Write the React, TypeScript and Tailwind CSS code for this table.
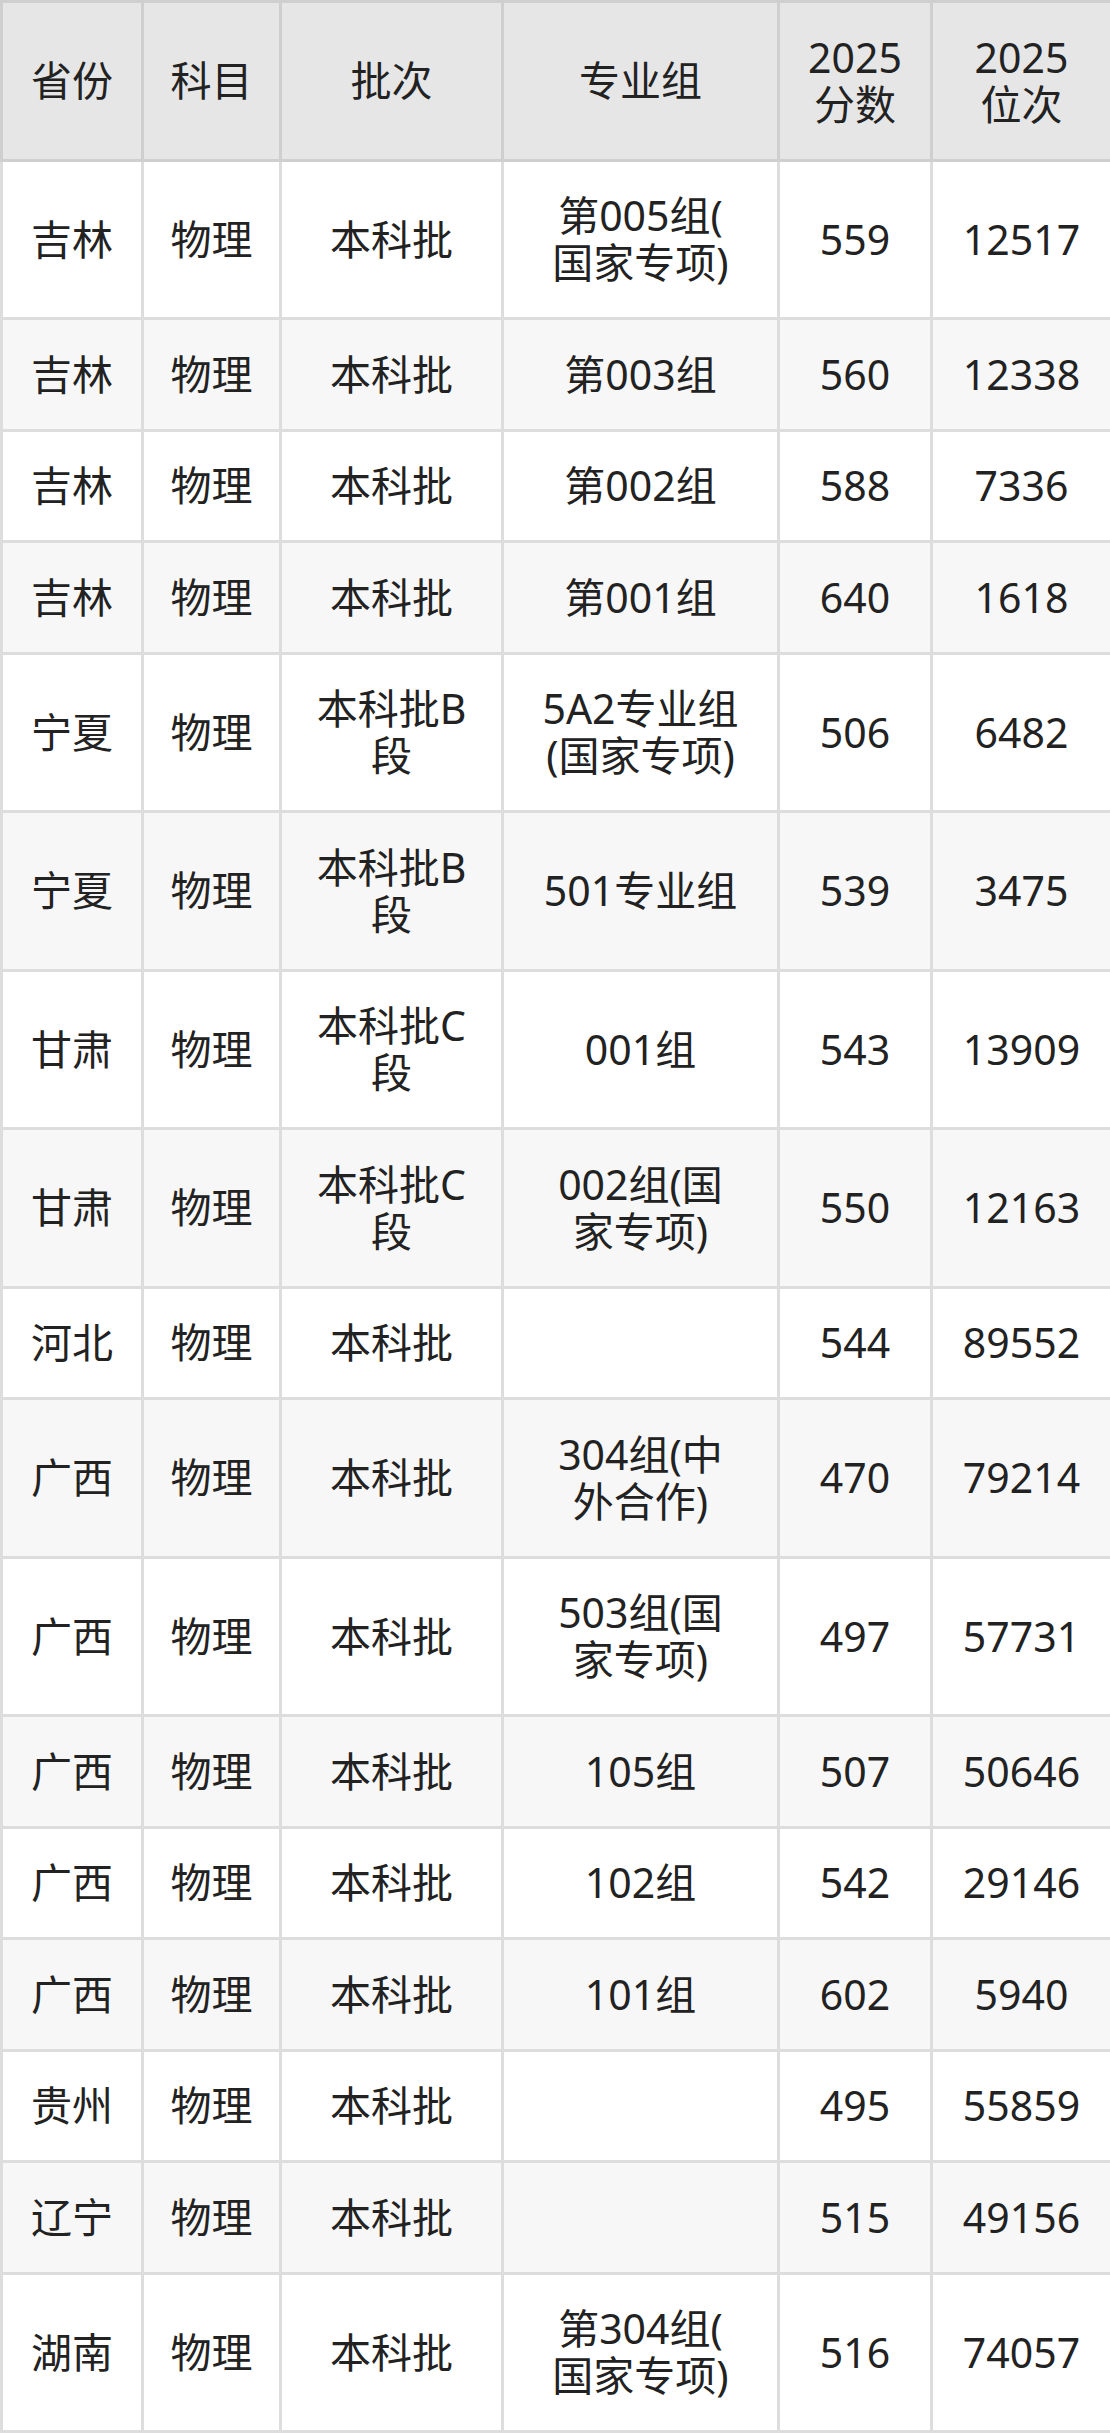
import React from 'react';

interface Row {
  province: string;
  subject: string;
  batch: string[];
  group: string[];
  score: string;
  rank: string;
}

const rows: Row[] = [
  { province: '吉林', subject: '物理', batch: ['本科批'], group: ['第005组(', '国家专项)'], score: '559', rank: '12517' },
  { province: '吉林', subject: '物理', batch: ['本科批'], group: ['第003组'], score: '560', rank: '12338' },
  { province: '吉林', subject: '物理', batch: ['本科批'], group: ['第002组'], score: '588', rank: '7336' },
  { province: '吉林', subject: '物理', batch: ['本科批'], group: ['第001组'], score: '640', rank: '1618' },
  { province: '宁夏', subject: '物理', batch: ['本科批B', '段'], group: ['5A2专业组', '(国家专项)'], score: '506', rank: '6482' },
  { province: '宁夏', subject: '物理', batch: ['本科批B', '段'], group: ['501专业组'], score: '539', rank: '3475' },
  { province: '甘肃', subject: '物理', batch: ['本科批C', '段'], group: ['001组'], score: '543', rank: '13909' },
  { province: '甘肃', subject: '物理', batch: ['本科批C', '段'], group: ['002组(国', '家专项)'], score: '550', rank: '12163' },
  { province: '河北', subject: '物理', batch: ['本科批'], group: [], score: '544', rank: '89552' },
  { province: '广西', subject: '物理', batch: ['本科批'], group: ['304组(中', '外合作)'], score: '470', rank: '79214' },
  { province: '广西', subject: '物理', batch: ['本科批'], group: ['503组(国', '家专项)'], score: '497', rank: '57731' },
  { province: '广西', subject: '物理', batch: ['本科批'], group: ['105组'], score: '507', rank: '50646' },
  { province: '广西', subject: '物理', batch: ['本科批'], group: ['102组'], score: '542', rank: '29146' },
  { province: '广西', subject: '物理', batch: ['本科批'], group: ['101组'], score: '602', rank: '5940' },
  { province: '贵州', subject: '物理', batch: ['本科批'], group: [], score: '495', rank: '55859' },
  { province: '辽宁', subject: '物理', batch: ['本科批'], group: [], score: '515', rank: '49156' },
  { province: '湖南', subject: '物理', batch: ['本科批'], group: ['第304组(', '国家专项)'], score: '516', rank: '74057' },
];

const Lines = ({ lines }: { lines: string[] }) => (
  <>
    {lines.map((l, i) => (
      <span key={i} className="block whitespace-nowrap">
        {l}
      </span>
    ))}
  </>
);

const td = 'border-[3px] border-[#dddddd] px-2 py-[30.75px] text-center align-middle';
const th = 'border-[3px] border-[#cfcfcf] px-2 py-[30.75px] text-center align-middle font-normal';

const App = () => {
  return (
    <div
      className="w-[1110px] bg-white text-[#222222] text-[41px] leading-[47px]"
      style={{ fontFamily: '"Noto Sans", "Noto Sans CJK SC", sans-serif' }}
    >
      <table className="w-[1110px] table-fixed border-collapse">
        <colgroup>
          <col className="w-[141px]" />
          <col className="w-[138px]" />
          <col className="w-[222px]" />
          <col className="w-[276px]" />
          <col className="w-[153px]" />
          <col className="w-[180px]" />
        </colgroup>
        <thead>
          <tr className="bg-[#e6e6e6]">
            <th className={th}>省份</th>
            <th className={th}>科目</th>
            <th className={th}>批次</th>
            <th className={th}>专业组</th>
            <th className={th}>
              <Lines lines={['2025', '分数']} />
            </th>
            <th className={th}>
              <Lines lines={['2025', '位次']} />
            </th>
          </tr>
        </thead>
        <tbody>
          {rows.map((r, i) => (
            <tr key={i} className={i % 2 === 0 ? 'bg-white' : 'bg-[#f7f7f7]'}>
              <td className={td}>{r.province}</td>
              <td className={td}>{r.subject}</td>
              <td className={td}>
                <Lines lines={r.batch} />
              </td>
              <td className={td}>
                <Lines lines={r.group} />
              </td>
              <td className={td}>{r.score}</td>
              <td className={td}>{r.rank}</td>
            </tr>
          ))}
        </tbody>
      </table>
    </div>
  );
};

export default App;
